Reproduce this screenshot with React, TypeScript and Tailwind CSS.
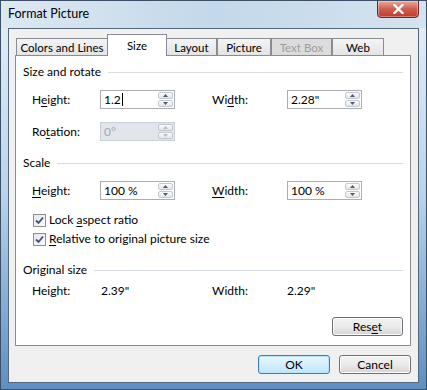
import type { ReactNode } from 'react';

const font = { fontFamily: 'Lato, "Noto Sans", sans-serif' };

function U({ children }: { children: ReactNode }) {
    return <span className="underline underline-offset-2">{children}</span>;
}

function Spinner({ disabled }: { disabled?: boolean }) {
    const arrow = disabled ? '#b8bec8' : '#4d5a70';
    return (
        <div className="flex flex-col gap-px pr-px py-px">
            <div className="w-[15px] h-[8px] border border-[#c3c8d0] rounded-[2px] bg-gradient-to-b from-[#fbfbfb] to-[#e3e5e8] flex items-center justify-center">
                <svg width="5" height="3" viewBox="0 0 5 3"><path d="M0 3 L2.5 0 L5 3 Z" fill={arrow} /></svg>
            </div>
            <div className="w-[15px] h-[8px] border border-[#c3c8d0] rounded-[2px] bg-gradient-to-b from-[#fbfbfb] to-[#e3e5e8] flex items-center justify-center">
                <svg width="5" height="3" viewBox="0 0 5 3"><path d="M0 0 L5 0 L2.5 3 Z" fill={arrow} /></svg>
            </div>
        </div>
    );
}

function SpinInput({ value, caret, disabled }: { value: string; caret?: boolean; disabled?: boolean }) {
    return (
        <div className={`w-[75px] h-[19px] border flex items-stretch ${disabled ? 'border-[#c9d0d9] bg-[#e1e6ec]' : 'border-[#abadb3] bg-white'}`}>
            <div className={`flex-1 flex items-center pl-[3px] text-[12px] ${disabled ? 'text-[#a3a9b2]' : 'text-black'}`}>
                {value}
                {caret && <span className="inline-block w-px h-[13px] bg-black ml-px" />}
            </div>
            <Spinner disabled={disabled} />
        </div>
    );
}

function GroupHeader({ title }: { title: string }) {
    return (
        <div className="h-[16px] flex items-center pl-[7px] pr-[7px] gap-[7px]">
            <span className="text-[12px] text-black whitespace-nowrap">{title}</span>
            <div className="flex-1 h-px bg-[#d5dce4]" />
        </div>
    );
}

function Label({ children, w }: { children: ReactNode; w: string }) {
    return <div className={`${w} text-[12px] text-black`}>{children}</div>;
}

function CheckBox({ children }: { children: ReactNode }) {
    return (
        <div className="h-[16px] flex items-center pl-[17px] gap-[3px]">
            <div className="w-[13px] h-[13px] border border-[#8e8f8f] bg-gradient-to-br from-[#e6e6e6] to-[#fbfbfb] flex items-center justify-center">
                <svg width="9" height="9" viewBox="0 0 9 9">
                    <path d="M1 4.5 L3.5 7 L8 1.5" stroke="#3d4f7d" strokeWidth="1.8" fill="none" />
                </svg>
            </div>
            <span className="text-[12px] text-black">{children}</span>
        </div>
    );
}

function Btn({ children, def, w = 'w-[72px]' }: { children: ReactNode; def?: boolean; w?: string }) {
    return (
        <div className={`${w} h-[19px] rounded-[3px] border flex items-center justify-center text-[12px] text-black ${def ? 'border-[#3c7fb1] bg-gradient-to-b from-[#eaf6fd] to-[#bee6fd] shadow-[inset_0_0_0_1px_#b7e3fb]' : 'border-[#707070] bg-gradient-to-b from-[#f2f2f2] via-[#ebebeb] to-[#d4d4d4] shadow-[inset_0_0_0_1px_#fcfcfc]'}`}>
            {children}
        </div>
    );
}

function Tab({ label, w, selected, disabled }: { label: string; w: string; selected?: boolean; disabled?: boolean }) {
    if (selected) {
        return (
            <div className={`${w} h-[22px] border border-b-0 border-[#898c95] bg-white flex items-center justify-center text-[11.5px] text-black relative z-10 -mx-px`}>
                {label}
            </div>
        );
    }
    return (
        <div className={`${w} h-[18px] border border-b-0 border-[#898c95] flex items-center justify-center text-[11.5px] ${disabled ? 'bg-[#dcdcdc] text-[#9d9d9d]' : 'bg-gradient-to-b from-[#f4f4f4] to-[#e3e3e3] text-black'}`}>
            {label}
        </div>
    );
}

export default function App() {
    return (
        <div style={font} className="w-[427px] h-[390px] flex flex-col bg-gradient-to-b from-[#e9f0f6] via-[#b9d3ea] to-[#5d8fc2] border border-[#3b4f66] relative overflow-hidden">
            {/* Title bar */}
            <div className="h-[27px] flex items-center pl-[7px] bg-gradient-to-r from-[#dde8f1] via-[#c3d8ea] to-[#d4e3ef]">
                <span className="text-[12.5px] text-black">Format Picture</span>
            </div>
            <div className="absolute right-[7px] top-[-1px] w-[42px] h-[18px] rounded-b-[4px] border border-[#6a2a28] bg-gradient-to-b from-[#e9a99b] via-[#cf5d4f] to-[#c0392b] flex items-center justify-center shadow-[inset_0_0_0_1px_rgba(255,255,255,0.35)]">
                <svg width="11" height="10" viewBox="0 0 11 10">
                    <path d="M1.5 1 L9.5 9 M9.5 1 L1.5 9" stroke="#fff" strokeWidth="2.4" strokeLinecap="square" />
                </svg>
            </div>

            {/* Client area */}
            <div className="mx-[7px] mb-[6px] flex-1 bg-[#f0f0f0] border border-[#55677a] flex flex-col pt-[5px] pl-[6px] pr-[6px]">
                {/* Tabs */}
                <div className="flex items-end pl-px">
                    <Tab label="Colors and Lines" w="w-[92px]" />
                    <Tab label="Size" w="w-[60px]" selected />
                    <Tab label="Layout" w="w-[51px]" />
                    <Tab label="Picture" w="w-[54px]" />
                    <Tab label="Text Box" w="w-[61px]" disabled />
                    <Tab label="Web" w="w-[52px]" />
                </div>
                {/* Panel */}
                <div className="w-[396px] h-[291px] -mt-px border border-[#898c95] bg-white flex flex-col pt-[8px]">
                    <GroupHeader title="Size and rotate" />
                    <div className="flex items-center pl-[16px] mt-[10px]">
                        <Label w="w-[68px]">H<U>e</U>ight:</Label>
                        <SpinInput value="1.2" caret />
                        <div className="w-[37px]" />
                        <Label w="w-[75px]">Wi<U>d</U>th:</Label>
                        <SpinInput value={'2.28"'} />
                    </div>
                    <div className="flex items-center pl-[16px] mt-[13px]">
                        <Label w="w-[68px]">Ro<U>t</U>ation:</Label>
                        <SpinInput value="0°" disabled />
                    </div>

                    <div className="mt-[14px]">
                        <GroupHeader title="Scale" />
                    </div>
                    <div className="flex items-center pl-[16px] mt-[10px]">
                        <Label w="w-[68px]"><U>H</U>eight:</Label>
                        <SpinInput value="100 %" />
                        <div className="w-[37px]" />
                        <Label w="w-[75px]"><U>W</U>idth:</Label>
                        <SpinInput value="100 %" />
                    </div>
                    <div className="mt-[12px]">
                        <CheckBox>Lock <U>a</U>spect ratio</CheckBox>
                    </div>
                    <div className="mt-[3px]">
                        <CheckBox><U>R</U>elative to original picture size</CheckBox>
                    </div>

                    <div className="mt-[15px]">
                        <GroupHeader title="Original size" />
                    </div>
                    <div className="flex items-center pl-[16px] mt-[5px] h-[16px]">
                        <Label w="w-[69px]">Height:</Label>
                        <Label w="w-[111px]">2.39"</Label>
                        <Label w="w-[75px]">Width:</Label>
                        <Label w="w-[75px]">2.29"</Label>
                    </div>

                    <div className="flex justify-end pr-[7px] mt-[18px]">
                        <Btn w="w-[71px]">Res<U>e</U>t</Btn>
                    </div>
                </div>

                {/* Dialog buttons */}
                <div className="flex justify-end gap-[9px] mt-[9px] pr-px">
                    <Btn def>OK</Btn>
                    <Btn>Cancel</Btn>
                </div>
            </div>
        </div>
    );
}
